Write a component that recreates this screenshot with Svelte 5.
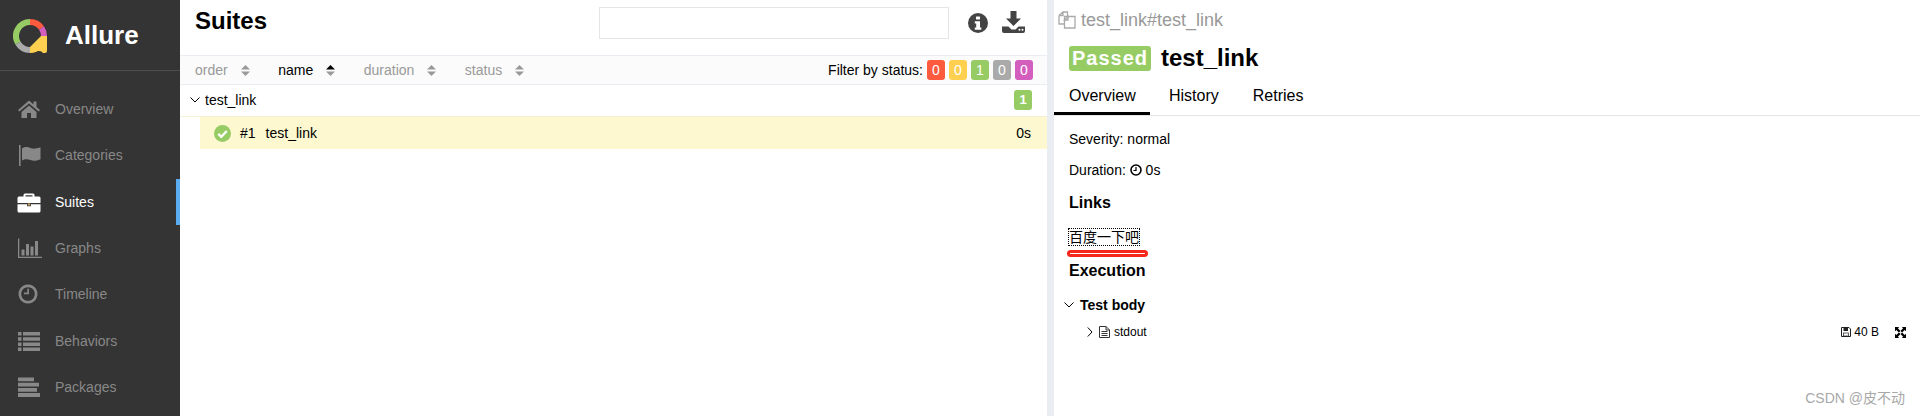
<script>
  const nav = [
    { label: 'Overview', icon: 'home' },
    { label: 'Categories', icon: 'flag' },
    { label: 'Suites', icon: 'case', active: true },
    { label: 'Graphs', icon: 'chart' },
    { label: 'Timeline', icon: 'clock' },
    { label: 'Behaviors', icon: 'list' },
    { label: 'Packages', icon: 'bars' }
  ];
  const sorts = [
    { label: 'order' },
    { label: 'name', active: true },
    { label: 'duration' },
    { label: 'status' }
  ];
  const counts = [
    { n: 0, c: '#fd5a3e' },
    { n: 0, c: '#ffd050' },
    { n: 1, c: '#97cc64' },
    { n: 0, c: '#aaaaaa' },
    { n: 0, c: '#d35ebe' }
  ];
</script>

<div class="page">
  <aside class="side">
    <div class="brand">
      <svg class="logo" viewBox="0 0 34 34" width="34" height="34" fill="none" stroke-width="6">
        <path d="M17 3A14 14 0 0 1 28.5 9" stroke="#fd5a3e" />
        <path d="M28.5 9A14 14 0 0 1 31 17" stroke="#d35ebe" />
        <path d="M31 17A14 14 0 0 1 17 31" stroke="#ffd050" />
        <path d="M28 17h6v15q0 2 -2 2h-2q-1 -2 -4 -2h-9v-4z" fill="#ffd050" stroke="none" />
        <path d="M17 31A14 14 0 0 1 4.9 24" stroke="#aaaaaa" />
        <path d="M4.9 24A14 14 0 0 1 17 3" stroke="#97cc64" />
      </svg>
      <span class="brand-name">Allure</span>
    </div>
    <nav class="nav">
      {#each nav as item}
        <div class="nav-item" class:active={item.active}>
          <svg class="nav-icon" viewBox="0 0 24 24" width="24" height="24" fill="currentColor">
            {#if item.icon === 'home'}
              <path d="M12 3.500 1 13l1.300 1.600L12 6.400l9.700 8.200L23 13l-3.500-3V4.500h-3v3z" />
              <path d="M4.500 15 12 8.600l7.500 6.400V21h-5.500v-5h-4v5H4.500z" />
            {:else if item.icon === 'flag'}
              <rect x="2" y="2" width="1.600" height="21" />
              <path d="M5 5.500c3-2 6-1.600 8.500-.5s5 .8 10-.8v12c-5 2-7.500 1.800-10 .8s-5.500-1.500-8.500.5z" />
            {:else if item.icon === 'case'}
              <path d="M8 3.500h8q1.500 0 1.500 1.500v1.500H22q1.500 0 1.500 1.500v5H.5V8Q.5 6.500 2 6.500h4.500V5Q6.500 3.500 8 3.500zM8.500 5.200v1.300h7V5.200z" fill-rule="evenodd" />
              <path d="M.5 14.200h9.500v2h4v-2h9.500V21q0 1.500-1.500 1.500H2Q.5 22.500.5 21z" />
              <rect x="10.700" y="13.500" width="2.600" height="2" fill="#c9a46a" />
            {:else if item.icon === 'chart'}
              <path d="M1 2.500h1.300V20.700H25V22H1z" />
              <rect x="4.500" y="13.500" width="3" height="6" />
              <rect x="9" y="8" width="3" height="11.500" />
              <rect x="13.500" y="10.500" width="3" height="9" />
              <rect x="18" y="5" width="3" height="14.500" />
            {:else if item.icon === 'clock'}
              <path d="M11 2.500a9.500 9.500 0 1 0 .01 0zm0 2.700a6.800 6.800 0 1 1-.01 0z" fill-rule="evenodd" />
              <path d="M10.300 6.800h1.700v5.500H7v-1.700h3.300z" />
            {:else if item.icon === 'list'}
              <path d="M1 3h3.500v3.500H1zM6 3h17v3.500H6zM1 8.200h3.500v3.500H1zM6 8.200h17v3.500H6zM1 13.400h3.500v3.500H1zM6 13.400h17v3.500H6zM1 18.600h3.500V22H1zM6 18.600h17V22H6z" />
            {:else}
              <path d="M1 2.500h16v3.800H1zM1 7.700h21v3.800H1zM1 12.900h19v3.800H1zM1 18.100h22V22H1z" />
            {/if}
          </svg>
          <span>{item.label}</span>
        </div>
      {/each}
    </nav>
  </aside>

  <section class="left">
    <header class="left-head">
      <h2 class="title">Suites</h2>
      <div class="search"></div>
      <svg class="info" viewBox="0 0 20 20" width="20" height="20">
        <circle cx="10" cy="10" r="10" fill="#444" />
        <rect x="8" y="3.500" width="4" height="3" rx=".5" fill="#fff" />
        <path d="M6.800 8.200h5.200v6.300h1.300v2.200H6.800v-2.200h1.400v-4.100H6.800z" fill="#fff" />
      </svg>
      <svg class="download" viewBox="0 0 23 22" width="23" height="22">
        <path d="M8.500 0h6v7.500H19L11.500 15 4 7.500h4.500z" fill="#444" />
        <path d="M0 15.500h6.500l3 3h4l3-3H23V20a2 2 0 0 1-2 2H2a2 2 0 0 1-2-2z" fill="#444" />
        <circle cx="17.500" cy="18.800" r="1" fill="#fff" />
        <circle cx="20.500" cy="18.800" r="1" fill="#fff" />
      </svg>
    </header>
    <div class="sortbar">
      {#each sorts as s}
        <div class="sort" class:on={s.active}>
          <span>{s.label}</span>
          <svg viewBox="0 0 9 11" width="9" height="11">
            <path d="M4.500 0 9 4.500H0z" fill={s.active ? '#000' : '#999'} />
            <path d="M0 6.500h9L4.500 11z" fill="#999" />
          </svg>
        </div>
      {/each}
      <div class="filter">
        <span class="filter-label">Filter by status:</span>
        {#each counts as c}
          <span class="pill" style="background:{c.c}">{c.n}</span>
        {/each}
      </div>
    </div>
    <div class="group">
      <svg class="chev" viewBox="0 0 10 6" width="10" height="6"><path d="M.5.500 5 5 9.500.5" fill="none" stroke="#000" stroke-width="1" /></svg>
      <span class="group-name">test_link</span>
      <span class="pill small">1</span>
    </div>
    <div class="row">
      <svg viewBox="0 0 17 17" width="17" height="17">
        <circle cx="8.500" cy="8.500" r="8.500" fill="#97cc64" />
        <path d="M4.300 8.800 7.300 11.800 12.800 6" fill="none" stroke="#fff" stroke-width="2.400" />
      </svg>
      <span class="num">#1</span>
      <span class="row-name">test_link</span>
      <span class="row-time">0s</span>
    </div>
  </section>

  <div class="split"></div>

  <section class="right">
    <div class="crumb">
      <svg viewBox="0 0 18 18" width="18" height="18" fill="none" stroke="#aaa" stroke-width="1.300">
        <path d="M1 4.500 5 1h4.500v4M1 4.500V13h5M1 4.500h4V1" />
        <path d="M6.500 5.500H17V17H6.500z" />
        <path d="M6.500 9 10 5.500V9z" />
      </svg>
      <span>test_link#test_link</span>
    </div>
    <div class="headline">
      <span class="passed">Passed</span>
      <span class="name">test_link</span>
    </div>
    <div class="tabs">
      <span class="tab current">Overview</span>
      <span class="tab">History</span>
      <span class="tab">Retries</span>
    </div>
    <div class="body">
      <p class="line first">Severity: normal</p>
      <p class="line">Duration:
        <svg class="mini" viewBox="0 0 12 12" width="12" height="12">
          <circle cx="6" cy="6" r="5" fill="none" stroke="#000" stroke-width="1.600" />
          <path d="M6 3v3.500H3.500" fill="none" stroke="#000" stroke-width="1.200" />
        </svg>
        0s</p>
      <h3 class="sub links">Links</h3>
      <div class="linkline">
        <a class="baidu" href="#top">百度一下吧</a>
        <span class="mark"></span>
      </div>
      <h3 class="sub exec">Execution</h3>
      <div class="step">
        <svg viewBox="0 0 10 6" width="10" height="6"><path d="M.5.500 5 5 9.500.5" fill="none" stroke="#000" stroke-width="1" /></svg>
        <strong>Test body</strong>
      </div>
      <div class="attach">
        <svg viewBox="0 0 6 10" width="6" height="10"><path d="M.8.500 5 5 .8 9.500" fill="none" stroke="#000" stroke-width="1" /></svg>
        <svg class="doc" viewBox="0 0 11 12" width="11" height="12" fill="none" stroke="#333">
          <path d="M.5.500h6.500l3.500 3.500v7.500H.500z" />
          <path d="M2.500 5.500h6M2.500 7.500h6M2.500 9.500h6M7 .5v3.500h3.500" />
        </svg>
        <span class="std">stdout</span>
        <svg class="save" viewBox="0 0 10 10" width="10" height="10">
          <path d="M.5.500h7.500l1.500 1.500v7.500H.500z" fill="none" stroke="#222" />
          <rect x="2.500" y="1" width="4.500" height="3" fill="#222" />
          <rect x="2.500" y="6" width="5" height="3" fill="none" stroke="#222" stroke-width=".7" />
        </svg>
        <span class="size">40 B</span>
        <svg class="expand" viewBox="0 0 11 11" width="11" height="11" fill="#000">
          <path d="M0 0h4.200L2.900 1.300 5.500 3.900 3.900 5.500 1.300 2.900 0 4.200zM11 0v4.200L9.700 2.900 7.100 5.500 5.500 3.900 8.100 1.300 6.800 0zM0 11V6.800L1.300 8.100 3.900 5.500 5.500 7.100 2.900 9.700 4.200 11zM11 11H6.800L8.100 9.700 5.500 7.100 7.100 5.500 9.700 8.100 11 6.800z" />
        </svg>
      </div>
    </div>
    <span class="mark-csdn">CSDN @皮不动</span>
  </section>
</div>

<style>
  :global(body) {
    margin: 0;
    background: #fff;
  }
  .page {
    display: flex;
    width: 1920px;
    height: 416px;
    overflow: hidden;
    font-family: "Liberation Sans", "Noto Sans CJK SC", sans-serif;
    font-size: 14px;
    color: #000;
  }
  .side {
    width: 180px;
    flex: none;
    background: #343434;
    color: #999;
  }
  .brand {
    display: flex;
    align-items: center;
    box-sizing: border-box;
    padding: 0 0 0 13px;
    border-bottom: 1px solid #4c4c4c;
    height: 71px;
    color: #fff;
  }
  .logo {
    margin-top: 1px;
  }
  .brand-name {
    margin-left: 18px;
    font-size: 26px;
    font-weight: 700;
  }
  .nav {
    padding-top: 15px;
  }
  .nav-item {
    display: flex;
    align-items: center;
    height: 46.3px;
    box-sizing: border-box;
    padding-left: 17px;
    color: #888;
  }
  .nav-item span {
    margin-left: 14px;
  }
  .nav-icon {
    flex: none;
    overflow: visible;
  }
  .nav-item.active {
    color: #fff;
    border-right: 4px solid #5aabf0;
  }
  .left {
    width: 867px;
    flex: none;
  }
  .left-head {
    display: flex;
    align-items: center;
    height: 55px;
    padding-left: 15px;
    box-sizing: border-box;
  }
  .title {
    margin: 0 0 13px;
    font-size: 24px;
    font-weight: 700;
  }
  .search {
    width: 350px;
    height: 32px;
    box-sizing: border-box;
    border: 1px solid #e3e6e8;
    margin: -9px 0 0 auto;
  }
  .info {
    margin: -9px 0 0 19px;
  }
  .download {
    margin: -11px 22px 0 14px;
  }
  .sortbar {
    display: flex;
    align-items: center;
    gap: 28.5px;
    height: 30px;
    box-sizing: border-box;
    padding: 0 14px 0 15px;
    background: #fbfbfb;
    border-top: 1px solid #eaeef2;
    border-bottom: 1px solid #eaeef2;
    color: #999;
  }
  .sort {
    display: flex;
    align-items: center;
    gap: 13px;
  }
  .sort.on {
    color: #000;
  }
  .filter {
    margin-left: auto;
    display: flex;
    align-items: center;
    gap: 4px;
    color: #000;
  }
  .pill {
    width: 18px;
    height: 20px;
    border-radius: 3px;
    color: #fff;
    text-align: center;
    line-height: 20px;
    font-size: 14px;
  }
  .group {
    display: flex;
    align-items: center;
    height: 32px;
    padding: 0 15px 2px 10px;
    border-bottom: 1px solid #f2f0d5;
    box-sizing: border-box;
  }
  .group-name {
    margin-left: 5px;
  }
  .pill.small {
    margin-left: auto;
    font-size: 13px;
    font-weight: 700;
    background: #97cc64;
  }
  .row {
    display: flex;
    align-items: center;
    height: 32px;
    margin-left: 20px;
    padding: 0 16px 0 14px;
    background: #fdf8cf;
  }
  .num {
    margin-left: 9px;
  }
  .row-name {
    margin-left: 10px;
  }
  .row-time {
    margin-left: auto;
  }
  .split {
    width: 7px;
    flex: none;
    background: #eaeef2;
  }
  .right {
    flex: 1;
    position: relative;
    min-width: 0;
  }
  .crumb {
    display: flex;
    align-items: center;
    gap: 5px;
    height: 20px;
    margin-top: 10px;
    padding-left: 4px;
    color: #999;
    font-size: 18px;
  }
  .headline {
    display: flex;
    align-items: center;
    gap: 10px;
    margin-top: 14px;
    padding-left: 15px;
  }
  .passed {
    width: 82px;
    height: 25px;
    border-radius: 3px;
    background: #97cc64;
    color: #fff;
    font-size: 20px;
    font-weight: 700;
    letter-spacing: 1px;
    line-height: 25px;
    text-align: center;
  }
  .name {
    font-size: 24px;
    font-weight: 700;
  }
  .tabs {
    display: flex;
    margin-top: 12px;
    height: 32px;
    box-sizing: border-box;
    border-bottom: 1px solid #e5e5e5;
  }
  .tab {
    padding: 3px 15px 0;
    box-sizing: border-box;
    height: 31px;
    font-size: 16px;
    line-height: 18px;
    margin-right: 4px;
  }
  .tab.current {
    border-bottom: 3px solid #000;
    width: 96px;
  }
  .body {
    padding: 0 0 0 15px;
  }
  .line {
    margin: 15px 0 0;
    line-height: 16px;
  }
  .mini {
    vertical-align: -1px;
  }
  .sub {
    margin: 0;
    font-size: 16px;
    font-weight: 700;
    line-height: 18px;
  }
  .links {
    margin-top: 16px;
  }
  .linkline {
    position: relative;
    margin-top: 16px;
    height: 18px;
  }
  .baidu {
    display: block;
    width: fit-content;
    margin-top: 1px;
    outline: 1px dotted #000;
    color: #000;
    text-decoration: none;
    line-height: 16px;
    position: relative;
    top: 1px;
  }
  .mark {
    position: absolute;
    left: -2px;
    top: 22px;
    width: 81px;
    height: 7px;
    box-sizing: border-box;
    background: #fff;
    border: 3px solid #f5261a;
    border-radius: 4px;
  }
  .exec {
    margin-top: 16px;
  }
  .step {
    display: flex;
    align-items: center;
    gap: 6px;
    margin-top: 17px;
    margin-left: -5px;
    height: 16px;
  }
  .attach {
    display: flex;
    align-items: center;
    margin-top: 12px;
    margin-left: 18px;
    height: 14px;
    font-size: 12px;
  }
  .doc {
    margin-left: 6px;
  }
  .std {
    margin-left: 4px;
  }
  .save {
    margin-left: auto;
  }
  .size {
    margin-left: 3px;
  }
  .expand {
    margin: 0 14px 0 16px;
  }
  .mark-csdn {
    position: absolute;
    right: 15px;
    top: 390px;
    font-size: 14px;
    line-height: 16px;
    color: #a8a8a8;
  }
</style>
